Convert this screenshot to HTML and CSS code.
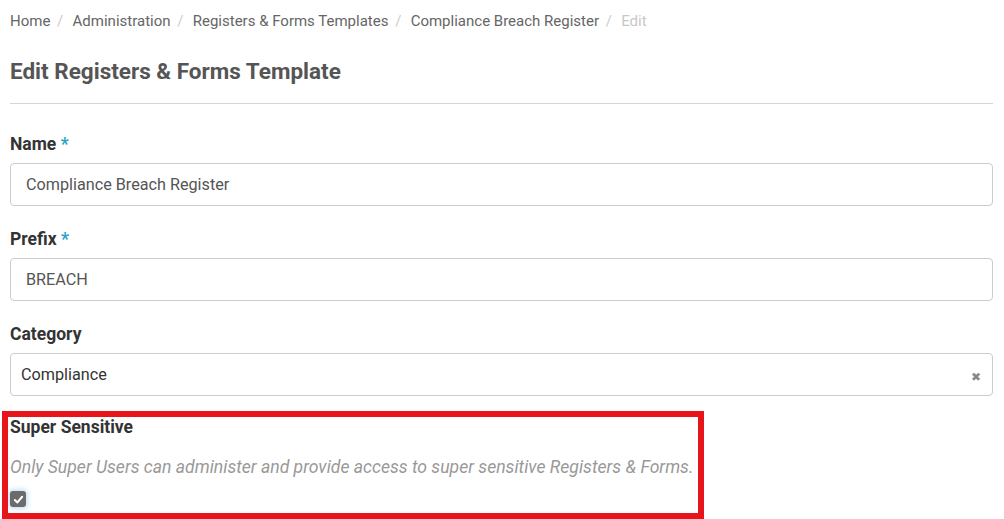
FILE: index.html
```html
<!DOCTYPE html>
<html>
<head>
<meta charset="utf-8">
<link rel="stylesheet" href="styles.css">
</head>
<body>
<div class="page">
  <nav class="crumbs">
    <a class="crumb">Home</a><span class="sep">/</span>
    <a class="crumb">Administration</a><span class="sep">/</span>
    <a class="crumb">Registers &amp; Forms Templates</a><span class="sep">/</span>
    <a class="crumb">Compliance Breach Register</a><span class="sep">/</span>
    <span class="crumb current">Edit</span>
  </nav>
  <h1 class="title">Edit Registers &amp; Forms Template</h1>
  <hr class="divider">
  <div class="group">
    <label class="label">Name <span class="req">*</span></label>
    <div class="input">Compliance Breach Register</div>
  </div>
  <div class="group">
    <label class="label">Prefix <span class="req">*</span></label>
    <div class="input">BREACH</div>
  </div>
  <div class="group">
    <label class="label">Category</label>
    <div class="input select"><span>Compliance</span><span class="clear">&#x2716;</span></div>
  </div>
  <div class="group sensitive">
    <div class="highlight"></div>
    <label class="label">Super Sensitive</label>
    <p class="help">Only Super Users can administer and provide access to super sensitive Registers &amp; Forms.</p>
    <span class="check"><svg width="12" height="12" viewBox="0 0 12 12"><path d="M2 6.5 L4.8 9.2 L10 3" fill="none" stroke="#fff" stroke-width="2.2" stroke-linecap="round" stroke-linejoin="round"/></svg></span>
  </div>
</div>
</body>
</html>
```
FILE: styles.css
```css
* { box-sizing: border-box; }
html, body { margin: 0; padding: 0; background: #fff; }
body { font-family: Roboto, "Liberation Sans", sans-serif; color: #333; height: 519px; overflow: hidden; }
.page { padding: 11px 11px 0 10px; }
.crumbs { display: flex; align-items: center; font-size: 15px; line-height: 20px; color: #666; }
.crumb { color: #666; }
.crumb.current { color: #c8c8c8; }
.sep { color: #ccc; padding: 0 9.3px 0 6.7px; }
.title { font-size: 22.5px; font-weight: 700; color: #555; margin: 27px 0 0; line-height: 26px; }
.divider { border: 0; border-top: 1px solid #d5d5d5; margin: 19px 0 0; }
.group { margin-top: 28px; display: flex; flex-direction: column; }
.group + .group { margin-top: 21px; }
.label { font-size: 17.5px; font-weight: 700; line-height: 24px; color: #333; }
.req { color: #2ba3c9; }
.input { margin-top: 7px; height: 43px; border: 1px solid #ccc; border-radius: 4px; padding: 0 15px; display: flex; align-items: center; font-size: 16.2px; color: #555; }
.select { padding: 0 11px 0 10px; height: 43px; justify-content: space-between; color: #333; }
.clear { color: #888; font-size: 12px; margin-top: 5px; }
.group.sensitive { position: relative; margin-top: 19px; }
.highlight { position: absolute; left: -8px; top: -4px; width: 702px; height: 108px; border: 6px solid #e8141b; pointer-events: none; }
.help { margin: 18px 0 0; font-size: 17.6px; font-style: italic; color: #999; line-height: 20px; }
.check { margin-top: 14px; width: 16px; height: 16px; border-radius: 3px; background: #6b6b6b; display: flex; align-items: center; justify-content: center; box-shadow: 0 0 4px 2px rgba(102,175,233,0.35); }
.check svg { width: 11px; height: 11px; }
```
